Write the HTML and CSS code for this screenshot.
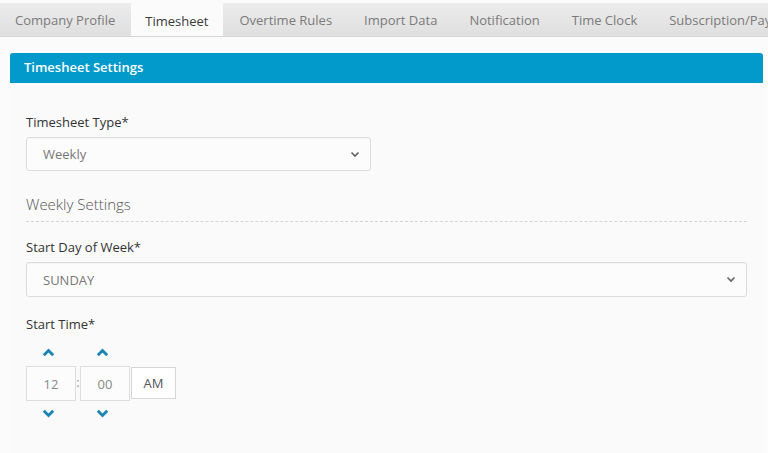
FILE: index.html
```html
<!DOCTYPE html>
<html>
<head>
<meta charset="utf-8">
<link rel="stylesheet" href="styles.css">
</head>
<body>
<nav class="tabs">
  <div class="tab">Company Profile</div>
  <div class="tab active">Timesheet</div>
  <div class="tab">Overtime Rules</div>
  <div class="tab">Import Data</div>
  <div class="tab">Notification</div>
  <div class="tab">Time Clock</div>
  <div class="tab">Subscription/Payment</div>
</nav>
<section class="panel">
  <div class="panel-head">Timesheet Settings</div>
  <div class="panel-body">
    <div class="group">
      <div class="label">Timesheet Type*</div>
      <div class="select half">
        <span>Weekly</span>
        <svg class="caret" width="10" height="7" viewBox="0 0 10 7"><polyline points="1.5,1.5 5,5 8.5,1.5" fill="none" stroke="#666" stroke-width="1.7"/></svg>
      </div>
    </div>
    <div class="section-title">Weekly Settings</div>
    <div class="group">
      <div class="label">Start Day of Week*</div>
      <div class="select tall">
        <span>SUNDAY</span>
        <svg class="caret" width="10" height="7" viewBox="0 0 10 7"><polyline points="1.5,1.5 5,5 8.5,1.5" fill="none" stroke="#666" stroke-width="1.7"/></svg>
      </div>
    </div>
    <div class="group">
      <div class="label">Start Time*</div>
      <div class="timepicker">
        <div class="tcol">
          <svg class="chev" width="13" height="9" viewBox="0 0 13 9"><polyline points="1.8,7.2 6.5,2.5 11.2,7.2" fill="none" stroke="#1a85b4" stroke-width="2.8"/></svg>
          <div class="tbox">12</div>
          <svg class="chev" width="13" height="9" viewBox="0 0 13 9"><polyline points="1.8,1.8 6.5,6.5 11.2,1.8" fill="none" stroke="#1a85b4" stroke-width="2.8"/></svg>
        </div>
        <div class="colon">:</div>
        <div class="tcol">
          <svg class="chev" width="13" height="9" viewBox="0 0 13 9"><polyline points="1.8,7.2 6.5,2.5 11.2,7.2" fill="none" stroke="#1a85b4" stroke-width="2.8"/></svg>
          <div class="tbox">00</div>
          <svg class="chev" width="13" height="9" viewBox="0 0 13 9"><polyline points="1.8,1.8 6.5,6.5 11.2,1.8" fill="none" stroke="#1a85b4" stroke-width="2.8"/></svg>
        </div>
        <div class="ampm">AM</div>
      </div>
    </div>
  </div>
</section>
</body>
</html>
```
FILE: styles.css
```css
html, body {
  margin: 0;
  padding: 0;
}
body {
  background: #fbfbfb;
  font-family: "Open Sans", "Noto Sans", sans-serif;
  font-size: 13px;
  color: #333;
  width: 768px;
  height: 453px;
  overflow: hidden;
}
.tabs {
  display: flex;
  margin-top: 3px;
  height: 33px;
  background: linear-gradient(#ececec, #dfdfdf);
  border-bottom: 1px solid #d6d6d6;
  white-space: nowrap;
  overflow: hidden;
}
.tab {
  padding: 0 16px;
  line-height: 35px;
  color: #7a7a7a;
  flex: none;
}
.tab:first-child {
  padding-left: 15px;
}
.tab.active {
  background: #fbfbfb;
  color: #3a3a3a;
  border-top: 2px solid #2c9fd1;
  margin-top: -2px;
  height: 34px;
  line-height: 36px;
  padding: 0 15px 0 14px;
}
.panel {
  margin: 16px 5px 0 10px;
  background: #fafafa;
  height: 400px;
}
.panel-head {
  background: #029acb;
  color: #fff;
  font-weight: 600;
  height: 30px;
  line-height: 28px;
  padding-left: 14px;
  border-radius: 3px 3px 0 0;
}
.panel-body {
  padding: 30px 16px 0 16px;
}
.label {
  line-height: 18px;
  color: #333;
  margin-bottom: 6px;
}
.select {
  display: flex;
  align-items: center;
  justify-content: space-between;
  height: 32px;
  border: 1px solid #dcdcdc;
  border-radius: 3px;
  background: #fcfcfc;
  padding: 0 10px 0 16px;
  color: #777;
  box-shadow: inset 0 1px 1px rgba(0,0,0,0.03);
}
.select.tall {
  height: 33px;
}
.select.half {
  width: 317px;
}
.caret {
  display: block;
}
.section-title {
  font-size: 15px;
  font-weight: 300;
  color: #555;
  line-height: 20px;
  margin-top: 23px;
  padding-bottom: 7px;
  border-bottom: 1px dashed #d4d4d4;
  margin-bottom: 16px;
}
.group + .group {
  margin-top: 18px;
}
.timepicker {
  display: flex;
  align-items: center;
  margin-top: 15px;
}
.tcol {
  display: flex;
  flex-direction: column;
  align-items: center;
  width: 50px;
}
.chev {
  display: block;
  margin-left: -6px;
}
.tcol .chev:first-child {
  margin-bottom: 9px;
}
.tcol .chev:last-child {
  margin-top: 8px;
}
.tbox {
  width: 48px;
  height: 33px;
  border: 1px solid #dedede;
  background: #fcfcfc;
  color: #888;
  display: flex;
  align-items: center;
  justify-content: center;
  box-sizing: content-box;
}
.colon {
  width: 4px;
  color: #999;
  text-align: center;
  margin-top: -2px;
}
.ampm {
  width: 43px;
  height: 30px;
  border: 1px solid #d6d6d6;
  background: #fff;
  color: #555;
  display: flex;
  align-items: center;
  justify-content: center;
  margin-left: 1px;
}
```
